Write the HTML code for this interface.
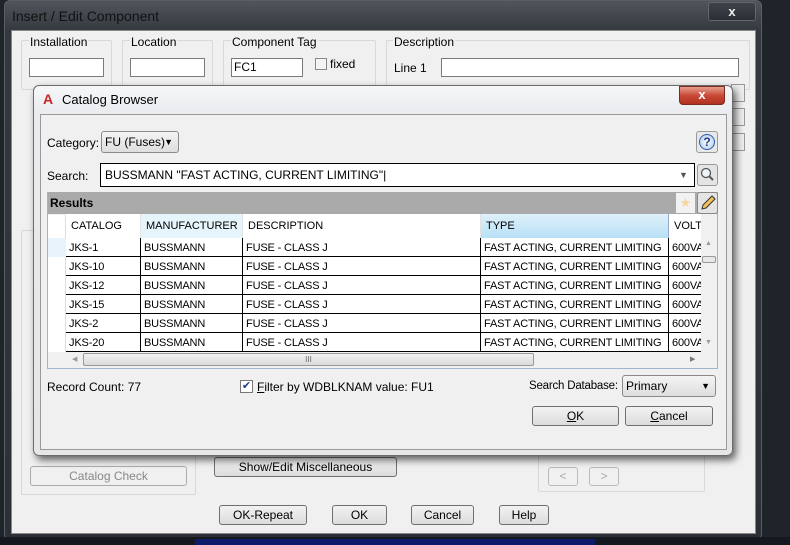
<!DOCTYPE html>
<html><head><meta charset="utf-8"><style>
*{box-sizing:border-box;margin:0;padding:0}
body{width:790px;height:545px;overflow:hidden;background:#1f242b;font-family:"Liberation Sans",sans-serif;font-size:12px;color:#000;position:relative}
.a{position:absolute}
.inp{position:absolute;background:#fff;border:1px solid #7a7a7a}
.btn{position:absolute;border:1px solid #707070;border-radius:3px;background:linear-gradient(#f2f2f2,#dcdcdc);text-align:center;font-size:12px;white-space:nowrap}
.grp{position:absolute;border:1px solid #d8d8d8;border-radius:2px}
.t{position:absolute;white-space:nowrap}
.cell{position:absolute;white-space:nowrap;overflow:hidden;font-size:11px;letter-spacing:-0.15px;padding-left:3px;padding-top:2px;line-height:17px;border-right:1px solid #000;border-bottom:1px solid #000;background:#fff}
.hd{position:absolute;white-space:nowrap;overflow:hidden;font-size:11px;padding-left:5px;line-height:24px;background:#fff;border-right:1px solid #e2e2e2}
</style></head><body>
<div class="a" style="left:4px;top:0;width:758px;height:540px;background:linear-gradient(#50555c,#34393f 30px,#2c3036);border:1px solid #5a5f66;border-radius:6px"></div>
<div class="t" style="left:12px;top:8px;font-size:14px;color:#111">Insert / Edit Component</div>
<div class="a" style="left:708px;top:2px;width:48px;height:19px;border:1px solid #666;border-radius:3px;background:linear-gradient(#3e434a,#2b2f35);color:#eee;text-align:center;font-weight:bold;font-size:13px;line-height:17px">x</div>
<div class="a" style="left:11px;top:30px;width:745px;height:504px;background:#f0f0f0;border:1px solid #888"></div>

<div class="grp" style="left:21px;top:40px;width:91px;height:50px"></div>
<div class="grp" style="left:21px;top:230px;width:175px;height:265px"></div>
<div class="t" style="left:29px;top:35px;background:#f0f0f0;padding:0 1px">Installation</div>
<div class="inp" style="left:29px;top:58px;width:75px;height:19px"></div>
<div class="grp" style="left:122px;top:40px;width:91px;height:50px"></div>
<div class="t" style="left:130px;top:35px;background:#f0f0f0;padding:0 1px">Location</div>
<div class="inp" style="left:130px;top:58px;width:75px;height:19px"></div>
<div class="grp" style="left:223px;top:40px;width:153px;height:50px"></div>
<div class="t" style="left:231px;top:35px;background:#f0f0f0;padding:0 1px">Component Tag</div>
<div class="inp" style="left:231px;top:58px;width:72px;height:19px;padding-left:2px;line-height:17px">FC1</div>
<div class="a" style="left:315px;top:58px;width:12px;height:12px;border:1px solid #888;background:#f4f4f4"></div>
<div class="t" style="left:330px;top:57px">fixed</div>
<div class="grp" style="left:386px;top:40px;width:364px;height:50px"></div>
<div class="t" style="left:393px;top:35px;background:#f0f0f0;padding:0 1px">Description</div>
<div class="t" style="left:394px;top:61px">Line 1</div>
<div class="inp" style="left:441px;top:58px;width:298px;height:19px"></div>
<div class="inp" style="left:731px;top:84px;width:14px;height:18px;border-color:#999;background:#eee"></div>
<div class="inp" style="left:731px;top:108px;width:14px;height:18px;border-color:#999;background:#eee"></div>
<div class="inp" style="left:731px;top:133px;width:14px;height:18px;border-color:#999;background:#eee"></div>

<div class="btn" style="left:30px;top:466px;width:157px;height:20px;color:#888;line-height:18px;background:#f0f0f0;border-color:#aaa">Catalog Check</div>
<div class="btn" style="left:214px;top:457px;width:183px;height:20px;line-height:18px">Show/Edit Miscellaneous</div>
<div class="grp" style="left:538px;top:450px;width:167px;height:42px"></div>
<div class="btn" style="left:548px;top:467px;width:30px;height:19px;color:#aaa;background:#f0f0f0;border-color:#bbb;line-height:17px">&lt;</div>
<div class="btn" style="left:589px;top:467px;width:30px;height:19px;color:#aaa;background:#f0f0f0;border-color:#bbb;line-height:17px">&gt;</div>
<div class="btn" style="left:219px;top:505px;width:88px;height:20px;line-height:18px">OK-Repeat</div>
<div class="btn" style="left:332px;top:505px;width:55px;height:20px;line-height:18px">OK</div>
<div class="btn" style="left:411px;top:505px;width:63px;height:20px;line-height:18px">Cancel</div>
<div class="btn" style="left:499px;top:505px;width:50px;height:20px;line-height:18px">Help</div>
<div class="a" style="left:0;top:537px;width:790px;height:8px;background:#14181f"></div>
<div class="a" style="left:195px;top:539px;width:400px;height:6px;background:#0e1a6a"></div>

<div class="a" style="left:33px;top:85px;width:700px;height:371px;background:linear-gradient(#f6f7f9,#e9ebee 28px,#e6e6e6);border:1px solid #6b6b6b;border-radius:6px;box-shadow:3px 4px 8px rgba(0,0,0,.6)"></div>
<div class="t" style="left:43px;top:91px;color:#c62828;font-weight:bold;font-size:14px">A</div>
<div class="t" style="left:62px;top:92px;font-size:13px">Catalog Browser</div>
<div class="a" style="left:679px;top:86px;width:46px;height:19px;border:1px solid #7a2a20;border-radius:0 0 4px 4px;background:linear-gradient(#e8a090,#c84a36 50%,#b33020);color:#fff;text-align:center;font-weight:bold;font-size:13px;line-height:16px">x</div>
<div class="a" style="left:40px;top:114px;width:687px;height:336px;background:#f0f0f0;border:1px solid #999"></div>
<div class="t" style="left:47px;top:136px">Category:</div>
<div class="a" style="left:101px;top:131px;width:78px;height:22px;border:1px solid #8a8a8a;border-radius:3px;background:linear-gradient(#f4f4f4,#dedede);padding-left:3px;line-height:20px;white-space:nowrap">FU (Fuses)<span style="position:absolute;right:5px;font-size:9px">▼</span></div>
<div class="a" style="left:696px;top:131px;width:22px;height:22px;border:1px solid #999;border-radius:3px;background:#e8e8e8"><div style="margin:2px auto;width:16px;height:16px;border-radius:50%;background:radial-gradient(#fff,#a9c6ec);border:1px solid #2f5fa8;color:#1d3f8a;font-weight:bold;font-size:12px;text-align:center;line-height:14px">?</div></div>
<div class="t" style="left:47px;top:169px">Search:</div>
<div class="a" style="left:100px;top:163px;width:595px;height:24px;border:1px solid #000;background:#fff;padding-left:4px;line-height:22px">BUSSMANN "FAST ACTING, CURRENT LIMITING"|<span style="position:absolute;left:578px;top:0;font-size:9px;color:#555">▼</span></div>
<div class="a" style="left:697px;top:164px;width:21px;height:22px;border:1px solid #999;border-radius:3px;background:#e4e4e4"><svg width="19" height="20" viewBox="0 0 19 20"><circle cx="8" cy="8" r="4.5" fill="#eef3f8" stroke="#555" stroke-width="1.3"/><path d="M11.3 11.3 L15 15" stroke="#555" stroke-width="2"/></svg></div>

<div class="a" style="left:47px;top:192px;width:671px;height:177px;background:#f0f0f0;border:1px solid #9fb5cc"></div>
<div class="a" style="left:48px;top:192px;width:670px;height:22px;background:#aaa"></div>
<div class="t" style="left:50px;top:196px;font-weight:bold;font-size:12px">Results</div>
<div class="a" style="left:676px;top:193px;width:19px;height:20px;background:#f2f2f2;color:#f5d89a;text-align:center;font-size:13px;line-height:20px">★</div>
<div class="a" style="left:697px;top:192px;width:21px;height:22px;border:1px solid #888;border-radius:3px;background:#e4e4e4"><svg width="19" height="20" viewBox="0 0 19 20"><path d="M4 16 L5 12 L14 3 L17 6 L8 15 Z" fill="#f3c25a" stroke="#333" stroke-width="1"/></svg></div>

<div class="a" style="left:48px;top:215px;width:18px;height:137px;background:#fff;border-right:1px solid #ddd"></div>
<div class="a" style="left:48px;top:238px;width:18px;height:19px;background:#e8f3fb"></div>
<div class="hd" style="left:66px;top:214px;width:75px">CATALOG</div>
<div class="hd" style="left:141px;top:214px;width:102px;background:#e6f4fb">MANUFACTURER</div>
<div class="hd" style="left:243px;top:214px;width:238px">DESCRIPTION</div>
<div class="hd" style="left:481px;top:214px;width:188px;background:linear-gradient(#def1fb,#b9e0f6);border-right:1px solid #9ac">TYPE</div>
<div class="hd" style="left:669px;top:214px;width:32px;border:none">VOLT</div>

<div id="rows"></div>
<script>
var r=["JKS-1","JKS-10","JKS-12","JKS-15","JKS-2","JKS-20"],h="";
for(var i=0;i<6;i++){var y=238+i*19;
h+='<div class="cell" style="left:66px;top:'+y+'px;width:75px;height:19px">'+r[i]+'</div>';
h+='<div class="cell" style="left:141px;top:'+y+'px;width:102px;height:19px">BUSSMANN</div>';
h+='<div class="cell" style="left:243px;top:'+y+'px;width:238px;height:19px">FUSE - CLASS J</div>';
h+='<div class="cell" style="left:481px;top:'+y+'px;width:188px;height:19px">FAST ACTING, CURRENT LIMITING</div>';
h+='<div class="cell" style="left:669px;top:'+y+'px;width:32px;height:19px;border-right:none">600VAC</div>';}
document.getElementById("rows").innerHTML=h;
</script>
<div class="a" style="left:701px;top:238px;width:16px;height:114px;background:#f0f0f0"></div>
<div class="t" style="left:705px;top:240px;font-size:7px;color:#999">▲</div>
<div class="a" style="left:702px;top:256px;width:14px;height:7px;border:1px solid #999;border-radius:2px;background:#e8e8e8"></div>
<div class="t" style="left:705px;top:339px;font-size:7px;color:#999">▼</div>
<div class="a" style="left:48px;top:352px;width:653px;height:16px;background:#f0f0f0"></div>
<div class="t" style="left:72px;top:355px;font-size:7px;color:#999">◀</div>
<div class="a" style="left:83px;top:353px;width:451px;height:13px;border:1px solid #999;border-radius:2px;background:linear-gradient(#f2f2f2,#dadada);text-align:center;font-size:8px;line-height:11px;color:#666">III</div>
<div class="t" style="left:690px;top:355px;font-size:7px;color:#777">▶</div>

<div class="t" style="left:47px;top:380px">Record Count: 77</div>
<div class="a" style="left:240px;top:380px;width:13px;height:13px;border:1px solid #777;background:#fff;color:#203c8a;font-size:11px;line-height:11px;text-align:center">✔</div>
<div class="t" style="left:257px;top:380px"><u>F</u>ilter by WDBLKNAM value: FU1</div>
<div class="t" style="left:529px;top:380px;font-size:11.5px;letter-spacing:-0.2px">Search Database:</div>
<div class="a" style="left:622px;top:375px;width:94px;height:22px;border:1px solid #8a8a8a;border-radius:3px;background:linear-gradient(#f4f4f4,#dedede);padding-left:3px;line-height:20px">Primary<span style="position:absolute;right:5px;font-size:9px">▼</span></div>
<div class="btn" style="left:532px;top:406px;width:87px;height:20px;line-height:18px"><u>O</u>K</div>
<div class="btn" style="left:625px;top:406px;width:88px;height:20px;line-height:18px"><u>C</u>ancel</div>
</body></html>
